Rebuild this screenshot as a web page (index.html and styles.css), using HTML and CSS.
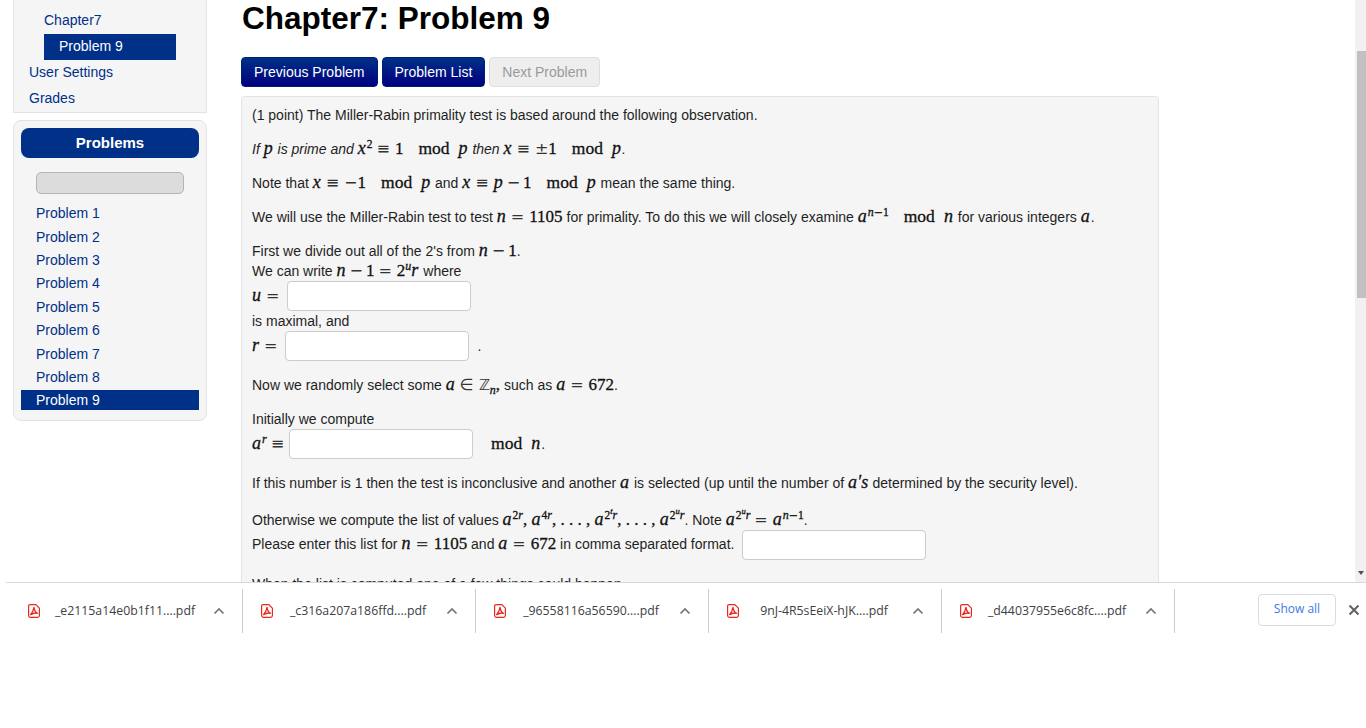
FILE: index.html
```html
<!doctype html>
<html>
<head>
	<title>Chapter7: Problem 9</title>
	<meta charset="utf-8" />
	<link rel="stylesheet" href="styles.css">
</head>
<body>
	<svg class="defs" width="0" height="0">
		<symbol id="pdf" viewBox="0 0 12 14">
			<path d="M2 .6H7.8L11.4 4.2V11.6A1.8 1.8 0 0 1 9.6 13.4H2.4A1.8 1.8 0 0 1 .6 11.6V2A1.4 1.4 0 0 1 2 .6Z" fill="#fff" stroke="#e8281f" stroke-width="1.2"/>
			<path d="M6 3.4C5.6 5.6 4.6 8.4 2.6 10.6c1.7-1 5-1.9 6.9-1.3C7.8 8.6 6.4 6 6 3.4Z" fill="none" stroke="#e8281f" stroke-width="1.3" stroke-linejoin="round"/>
		</symbol>
		<symbol id="up" viewBox="0 0 14 14">
			<path d="M2.5 9.5 7 5l4.5 4.5" fill="none" stroke="#757575" stroke-width="1.7"/>
		</symbol>
	</svg>

	<div class="page">
		<div class="sidebar">
			<div class="panel nav">
				<a class="sub" href="#">Chapter7</a>
				<a class="sub active" href="#">Problem 9</a>
				<a href="#">User Settings</a>
				<a href="#">Grades</a>
			</div>
			<div class="panel problems">
				<div class="problems-head">Problems</div>
				<div class="progress"></div>
				<ul class="problem-list">
					<li><a href="#">Problem 1</a></li>
					<li><a href="#">Problem 2</a></li>
					<li><a href="#">Problem 3</a></li>
					<li><a href="#">Problem 4</a></li>
					<li><a href="#">Problem 5</a></li>
					<li><a href="#">Problem 6</a></li>
					<li><a href="#">Problem 7</a></li>
					<li><a href="#">Problem 8</a></li>
					<li><a class="active" href="#">Problem 9</a></li>
				</ul>
			</div>
		</div>

		<div class="content">
			<h1>Chapter7: Problem 9</h1>
			<div class="buttons">
				<a class="btn" href="#">Previous Problem</a>
				<a class="btn" href="#">Problem List</a>
				<span class="btn disabled">Next Problem</span>
			</div>
			<div class="problem">
				<p>(1 point) The Miller-Rabin primality test is based around the following observation.</p>
				<p><em>If <span class="m">p</span> is prime and <span class="m">x</span><sup class="n">2</sup><span class="r">≡</span><span class="n">1</span><span class="mod">mod</span><span class="m">p</span> then <span class="m">x</span><span class="r">≡</span><span class="u">±</span><span class="n">1</span><span class="mod">mod</span><span class="m">p</span>.</em></p>
				<p>Note that <span class="m">x</span><span class="r">≡</span><span class="u">−</span><span class="n">1</span><span class="mod">mod</span><span class="m">p</span> and <span class="m">x</span><span class="r">≡</span><span class="m">p</span><span class="b">−</span><span class="n">1</span><span class="mod">mod</span><span class="m">p</span> mean the same thing.</p>
				<p>We will use the Miller-Rabin test to test <span class="m">n</span><span class="r">=</span><span class="n">1105</span> for primality. To do this we will closely examine <span class="m">a</span><sup class="m">n<span class="u">−</span></sup><sup class="n">1</sup><span class="mod">mod</span><span class="m">n</span> for various integers <span class="m">a</span>.</p>
				<div class="block">
					<div class="line">First we divide out all of the 2's from <span class="m">n</span><span class="b">−</span><span class="n">1</span>.</div>
					<div class="line">We can write <span class="m">n</span><span class="b">−</span><span class="n">1</span><span class="r">=</span><span class="n">2</span><sup class="m">u</sup><span class="m">r</span> where</div>
					<div class="row"><span><span class="m">u</span><span class="r">=</span></span><input class="answer u-answer" type="text"></div>
					<div class="line">is maximal, and</div>
					<div class="row"><span><span class="m">r</span><span class="r">=</span></span><input class="answer r-answer" type="text"><span class="dot">.</span></div>
				</div>
				<p>Now we randomly select some <span class="m">a</span><span class="r">∈</span><span class="z">ℤ</span><sub class="m">n</sub><span class="n">,</span> such as <span class="m">a</span><span class="r">=</span><span class="n">672</span>.</p>
				<div class="block">
					<div class="line">Initially we compute</div>
					<div class="row"><span><span class="m">a</span><sup class="m">r</sup><span class="r">≡</span></span><input class="answer a-answer" type="text"><span><span class="mod after">mod</span><span class="m">n</span>.</span></div>
				</div>
				<p>If this number is 1 then the test is inconclusive and another <span class="m">a</span> is selected (up until the number of <span class="m tight">a′s</span> determined by the security level).</p>
				<div class="block list-block">
					<div class="line">Otherwise we compute the list of values <span class="m">a</span><sup class="n">2</sup><sup class="m">r</sup><span class="n">, </span><span class="m">a</span><sup class="n">4</sup><sup class="m">r</sup><span class="n">, . . . , </span><span class="m">a</span><sup class="n">2<sup class="m">t</sup></sup><sup class="m">r</sup><span class="n">, . . . , </span><span class="m">a</span><sup class="n">2<sup class="m">u</sup></sup><sup class="m">r</sup>. Note <span class="m">a</span><sup class="n">2<sup class="m">u</sup></sup><sup class="m">r</sup><span class="r">=</span><span class="m">a</span><sup class="m">n<span class="u">−</span></sup><sup class="n">1</sup>.</div>
					<div class="row"><span class="list-text">Please enter this list for <span class="m">n</span><span class="r">=</span><span class="n">1105</span> and <span class="m">a</span><span class="r">=</span><span class="n">672</span> in comma separated format.</span><input class="answer list-answer" type="text"></div>
				</div>
				<p>When the list is computed one of a few things could happen.</p>
			</div>
		</div>

		<div class="scrollbar">
			<div class="thumb"></div>
			<div class="arrow"></div>
		</div>
	</div>

	<div class="downloads">
		<div class="item"><svg class="pdf"><use href="#pdf"/></svg><span class="name">_e2115a14e0b1f11....pdf</span><svg class="chevron"><use href="#up"/></svg></div>
		<div class="item"><svg class="pdf"><use href="#pdf"/></svg><span class="name">_c316a207a186ffd....pdf</span><svg class="chevron"><use href="#up"/></svg></div>
		<div class="item"><svg class="pdf"><use href="#pdf"/></svg><span class="name">_96558116a56590....pdf</span><svg class="chevron"><use href="#up"/></svg></div>
		<div class="item"><svg class="pdf"><use href="#pdf"/></svg><span class="name">9nJ-4R5sEeiX-hJK....pdf</span><svg class="chevron"><use href="#up"/></svg></div>
		<div class="item"><svg class="pdf"><use href="#pdf"/></svg><span class="name">_d44037955e6c8fc....pdf</span><svg class="chevron"><use href="#up"/></svg></div>
		<a class="show-all" href="#">Show all</a>
		<svg class="close" width="12" height="12" viewBox="0 0 12 12"><path d="M1.5 1.5l9 9m0-9l-9 9" stroke="#616161" stroke-width="2"/></svg>
	</div>
</body>
</html>
```

FILE: styles.css
```css
html, body {
	margin: 0;
	height: 100%;
	overflow: hidden;
	background-color: #fff;
	font-family: "Liberation Sans", Arial, sans-serif;
	font-size: 14px;
	line-height: 20px;
	color: #1f1f1f;
}
a {
	color: #003087;
	text-decoration: none;
}
.defs {
	position: absolute;
}

.page {
	display: flex;
	height: 582px;
	overflow: hidden;
}

/* left column */
.sidebar {
	width: 194px;
	margin-left: 13px;
	flex: none;
}
.panel {
	background-color: #f5f5f5;
	border: 1px solid #e3e3e3;
}
.nav {
	display: flex;
	flex-direction: column;
	border-top: 0;
	padding: 8px 0 0 15px;
}
.nav a {
	height: 26px;
	line-height: 24px;
}
.nav .sub {
	margin-left: 15px;
}
.nav .active {
	width: 117px;
	padding-left: 15px;
	background-color: #003087;
	color: #fff;
}
.problems {
	margin-top: 7px;
	padding: 7px 7px 10px;
	border-radius: 8px;
}
.problems-head {
	height: 30px;
	line-height: 30px;
	border-radius: 8px;
	background-color: #003087;
	color: #fff;
	font-size: 15px;
	font-weight: bold;
	text-align: center;
}
.progress {
	height: 20px;
	margin: 14px 15px 0;
	border: 1px solid #b5b5b5;
	border-radius: 5px;
	background-color: #dcdcdc;
}
.problem-list {
	display: flex;
	flex-direction: column;
	gap: 3.4px;
	list-style: none;
	margin: 9.3px 0 0;
	padding: 0;
}
.problem-list a {
	display: block;
	padding-left: 15px;
}
.problem-list .active {
	background-color: #003087;
	color: #fff;
}

/* main column */
.content {
	width: 918px;
	margin-left: 34px;
	flex: none;
}
h1 {
	margin: 0 0 21px 1px;
	height: 36px;
	line-height: 36px;
	font-size: 31.5px;
	color: #000;
}
.buttons {
	display: flex;
	gap: 4px;
	margin-bottom: 9px;
}
.btn {
	height: 28px;
	line-height: 28px;
	padding: 0 12px;
	border: 1px solid #00206b;
	border-radius: 4px;
	background: linear-gradient(#003087, #000080);
	color: #fff;
}
.btn.disabled {
	border-color: #dedede;
	background: #eee;
	color: #9a9a9a;
}
.problem {
	box-sizing: border-box;
	height: 600px;
	padding: 8px 10px;
	border: 1px solid #e3e3e3;
	border-radius: 4px;
	background-color: #f5f5f5;
}
.problem p {
	margin: 0 0 14px;
}
.block {
	margin-bottom: 14px;
}
.list-block {
	padding-top: 3px;
}
.row {
	display: flex;
	align-items: center;
	height: 30px;
}
.list-text {
	margin-bottom: 2px;
}
.answer {
	box-sizing: border-box;
	width: 184px;
	height: 30px;
	padding: 0 6px;
	border: 1px solid #ccc;
	border-radius: 4px;
	background-color: #fff;
}
.u-answer {
	margin-left: 3px;
}
.r-answer {
	margin-left: 3px;
}
.a-answer {
	margin-left: 0;
}
.list-answer {
	margin-left: 8px;
}
.dot {
	margin-left: 8px;
}

/* math */
.m, .n, .mod {
	font-family: "Liberation Serif", "Times New Roman", serif;
	font-weight: normal;
	line-height: 0;
	color: #111;
	-webkit-text-stroke: 0.3px #111;
}
.m {
	font-size: 18px;
	font-style: italic;
	letter-spacing: 1px;
}
.m.tight {
	letter-spacing: 0.2px;
}
.n {
	font-size: 17px;
	font-style: normal;
}
.mod {
	font-size: 17.5px;
	font-style: normal;
	margin: 0 9px 0 15px;
}
.mod.after {
	margin-left: 18px;
}
.r, .b, .u, .z {
	font-family: "DejaVu Sans", sans-serif;
	font-size: 16px;
	font-style: normal;
	line-height: 0;
	color: #333;
}
.r {
	margin: 0 5px 0 4px;
}
.b {
	margin: 0 3px;
}
.z {
	font-size: 15px;
}
sup, sub {
	line-height: 0;
}
sup.m, sub.m {
	font-size: 12px;
	letter-spacing: 0;
}
sup.n {
	font-size: 11.5px;
}
sup sup.m {
	font-size: 8.5px;
}
sup .u {
	font-size: 11px;
}

/* scrollbar */
.scrollbar {
	position: relative;
	width: 11px;
	margin-left: auto;
	background-color: #f1f1f1;
	flex: none;
}
.thumb {
	position: absolute;
	top: 51px;
	left: 2px;
	right: 0;
	height: 247px;
	background-color: #c1c1c1;
}
.arrow {
	position: absolute;
	bottom: 7px;
	left: 3px;
	border: 3px solid transparent;
	border-top: 4px solid #505050;
	border-bottom: 0;
}

/* download shelf */
.downloads {
	display: flex;
	align-items: center;
	height: 44px;
	margin-left: 6px;
	padding: 6px 6px 0 4px;
	border-top: 1px solid #d9d9d9;
	font-family: "Open Sans", sans-serif;
	font-size: 12.3px;
	color: #3c4043;
}
.item {
	box-sizing: border-box;
	display: flex;
	align-items: center;
	width: 233px;
	height: 44px;
	padding-left: 18px;
	border-right: 1px solid #ccc;
}
.pdf {
	width: 12px;
	height: 14px;
	flex: none;
}
.name {
	width: 154px;
	margin-left: 8px;
	text-align: center;
	white-space: nowrap;
}
.chevron {
	width: 14px;
	height: 14px;
	margin-left: 10px;
	flex: none;
}
.show-all {
	box-sizing: border-box;
	width: 78px;
	height: 32px;
	line-height: 28px;
	margin: -2px 12px 0 auto;
	border: 1px solid #dadce0;
	border-radius: 4px;
	color: #3b78e7;
	text-align: center;
	font-size: 12px;
}
.close {
	margin-bottom: 2px;
	flex: none;
}
```
